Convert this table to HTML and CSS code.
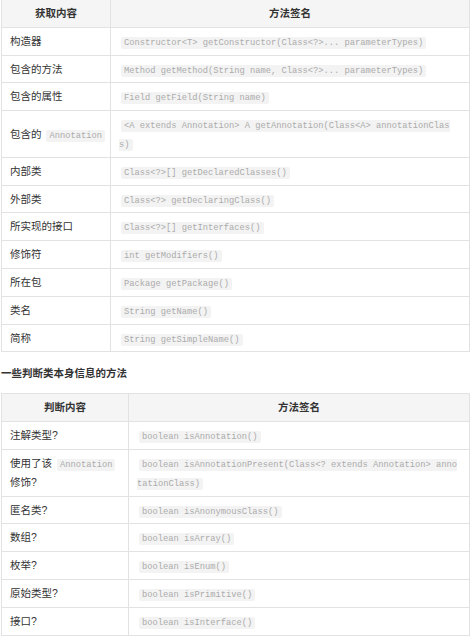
FILE: index.html
```html
<!DOCTYPE html>
<html lang="zh-CN">
<head>
  <meta charset="UTF-8" />
  <meta name="viewport" content="width=device-width, initial-scale=1.0"/>
  <title>Class 方法</title>
  <link rel="stylesheet" href="styles.css">
</head>
<body>
  <div class="page">
    <table class="sheet first">
      <colgroup><col class="c1a"><col></colgroup>
      <thead>
        <tr><th>获取内容</th><th>方法签名</th></tr>
      </thead>
      <tbody>
        <tr><td>构造器</td><td><code>Constructor&lt;T&gt; getConstructor(Class&lt;?&gt;... parameterTypes)</code></td></tr>
        <tr><td>包含的方法</td><td><code>Method getMethod(String name, Class&lt;?&gt;... parameterTypes)</code></td></tr>
        <tr><td>包含的属性</td><td><code>Field getField(String name)</code></td></tr>
        <tr><td class="keep">包含的 <code>Annotation</code></td><td><code>&lt;A extends Annotation&gt; A getAnnotation(Class&lt;A&gt; annotationClass)</code></td></tr>
        <tr><td>内部类</td><td><code>Class&lt;?&gt;[] getDeclaredClasses()</code></td></tr>
        <tr><td>外部类</td><td><code>Class&lt;?&gt; getDeclaringClass()</code></td></tr>
        <tr><td>所实现的接口</td><td><code>Class&lt;?&gt;[] getInterfaces()</code></td></tr>
        <tr><td>修饰符</td><td><code>int getModifiers()</code></td></tr>
        <tr><td>所在包</td><td><code>Package getPackage()</code></td></tr>
        <tr><td>类名</td><td><code>String getName()</code></td></tr>
        <tr><td>简称</td><td><code>String getSimpleName()</code></td></tr>
      </tbody>
    </table>

    <h4>一些判断类本身信息的方法</h4>

    <table class="sheet">
      <colgroup><col class="c1b"><col></colgroup>
      <thead>
        <tr><th>判断内容</th><th>方法签名</th></tr>
      </thead>
      <tbody>
        <tr><td>注解类型?</td><td><code>boolean isAnnotation()</code></td></tr>
        <tr><td>使用了该 <code>Annotation</code> 修饰?</td><td><code>boolean isAnnotationPresent(Class&lt;? extends Annotation&gt; annotationClass)</code></td></tr>
        <tr><td>匿名类?</td><td><code>boolean isAnonymousClass()</code></td></tr>
        <tr><td>数组?</td><td><code>boolean isArray()</code></td></tr>
        <tr><td>枚举?</td><td><code>boolean isEnum()</code></td></tr>
        <tr><td>原始类型?</td><td><code>boolean isPrimitive()</code></td></tr>
        <tr><td>接口?</td><td><code>boolean isInterface()</code></td></tr>
      </tbody>
    </table>
  </div>
</body>
</html>
```

FILE: styles.css
```css
body { margin: 0; background: #fff; color: #333; font-family: "Liberation Sans", "Noto Sans CJK SC", sans-serif; font-size: 10.5px; }
.page { padding: 0 4px 0 1px; }
.sheet { width: 100%; border-collapse: collapse; table-layout: fixed; }
.sheet.first { margin-top: -1px; }
.c1a { width: 109px; }
.c1b { width: 127px; }
th, td { border: 1px solid #e2e2e2; padding: 4px 8px; line-height: 18.8px; text-align: left; vertical-align: middle; }
th { background: #f5f5f5; font-weight: bold; text-align: center; }
td.keep { white-space: nowrap; }
code { font-family: "Liberation Mono", monospace; font-size: 8.75px; line-height: 1; color: #ababab; background: #f3f3f3; padding: 1px 3px; margin-left: 2px; border-radius: 2px; word-break: break-all; }
h4 { margin: 12px 0 10px; font-size: 10.5px; line-height: 19px; font-weight: bold; }
```
